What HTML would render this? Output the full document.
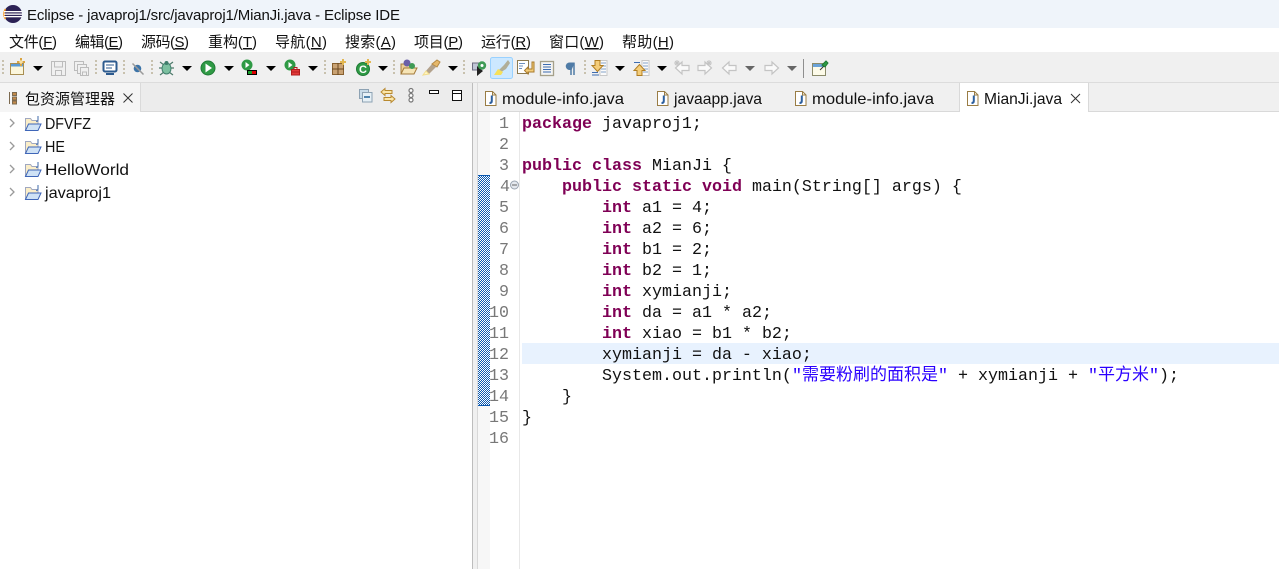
<!DOCTYPE html>
<html lang="zh"><head><meta charset="utf-8"><title>Eclipse</title>
<style>
html,body{margin:0;padding:0;width:1279px;height:569px;overflow:hidden;background:#fff}
svg{display:block;position:absolute;left:0;top:0}
.ui{font-family:"Liberation Sans","Noto Sans CJK SC",sans-serif;font-size:16px;fill:#111}
.cjk{font-family:"Liberation Sans","Noto Sans CJK SC",sans-serif;font-size:15px;fill:#111}
.m text{font-family:"Liberation Mono","Noto Sans CJK SC",monospace;font-size:16.67px;fill:#111;white-space:pre}
.m .k{fill:#7f0055;font-weight:bold}
.m text.s{fill:#2a00ff}
.n text{font-family:"Liberation Mono",monospace;font-size:16.67px;fill:#787878;text-anchor:end}
.u{text-decoration:underline}
</style></head><body>
<svg width="1279" height="569" viewBox="0 0 1279 569" xmlns="http://www.w3.org/2000/svg">
<defs>
<pattern id="chk" width="2" height="2" patternUnits="userSpaceOnUse" x="478" y="175"><rect width="2" height="2" fill="#fff"/><rect width="1" height="1" fill="#0a58b0"/><rect x="1" y="1" width="1" height="1" fill="#0a58b0"/></pattern>
<path id="dd" d="M0 0h10l-5 5z" fill="#000"/>
<path id="ddg" d="M0 0h10l-5 5z" fill="#666"/>
<g id="grip" fill="#c8c1ae"><rect y="0" width="2" height="2"/><rect y="4" width="2" height="2"/><rect y="8" width="2" height="2"/><rect y="12" width="2" height="2"/></g>
<g id="jf"><path d="M.5.5h7l3.500 3.500v10.500h-10.500z" fill="#fff" stroke="#9a7d45"/><path d="M7.500.5v3.500h3" fill="none" stroke="#9a7d45"/><path d="M6.800 4.500v5.500q0 2-2.300 2" fill="none" stroke="#2c5f9e" stroke-width="2"/></g>
<g id="prj"><path d="M1.500 2.500h5l1.500 2h6v9h-12.500z" fill="#fbeec8" stroke="#a0a8c0"/><path d="M1.500 14.500l3-6.500h12.500l-3 6.500z" fill="#cfe2f5" stroke="#3f66b8"/><path d="M14 0v4q0 1.500-2 1.500" fill="none" stroke="#5f82b8" stroke-width="1.200"/></g>
<path id="chev" d="M0 0l4 4-4 4" fill="none" stroke="#9a9a9a" stroke-width="1.300"/>
<path id="x" d="M0 0l9 9M9 0l-9 9" stroke="#333" stroke-width="1" fill="none"/>
<path id="la" d="M.5 7l6.500-6v3.500h7v5h-7v3.500z" fill="#fafafa" stroke="#c4c4c4" stroke-width="1.200"/>
</defs>

<!-- chrome -->
<rect width="1279" height="28" fill="#eff4fa"/>
<rect y="28" width="1279" height="24" fill="#fff"/>
<rect y="52" width="1279" height="31" fill="#f0f0f0"/>
<rect y="82" width="1279" height="1" fill="#dcdcdc"/>
<rect x="0" y="83" width="472" height="29" fill="#ececec"/>
<rect x="0" y="83" width="140" height="29" fill="#f5f5f5"/>
<rect x="140" y="83" width="1" height="29" fill="#dadada"/>
<rect x="141" y="111" width="331" height="1" fill="#d9d9d9"/>
<rect x="472" y="83" width="1" height="486" fill="#bdbdbd"/>
<rect x="473" y="83" width="4" height="486" fill="#f0f0f0"/>
<rect x="477" y="83" width="802" height="29" fill="#f0f0f0"/>
<rect x="477" y="83" width="1" height="29" fill="#dcdcdc"/>
<rect x="477" y="111" width="802" height="1" fill="#d9d9d9"/>
<rect x="959" y="83" width="130" height="29" fill="#fff"/>
<rect x="959" y="83" width="1" height="29" fill="#d9d9d9"/>
<rect x="1088" y="83" width="1" height="29" fill="#d9d9d9"/>
<rect x="477" y="112" width="13" height="457" fill="#f7f7f7"/>
<rect x="477" y="112" width="1" height="457" fill="#d8d8d8"/>
<rect x="478" y="175" width="12" height="230" fill="url(#chk)"/>
<rect x="478" y="175" width="12" height="1" fill="#0a58b0"/>
<rect x="478" y="405" width="12" height="1" fill="#0a58b0"/>
<rect x="519" y="112" width="1" height="457" fill="#e8e8e8"/>
<rect x="522" y="343" width="757" height="21" fill="#e8f2fe"/>

<!-- title -->
<circle cx="13" cy="14" r="9" fill="#2c2255"/>
<path d="M5.500 9a9 9 0 0 0 0 10" fill="none" stroke="#f7941e" stroke-width="1.500"/>
<rect x="4" y="11" width="18" height="1.300" fill="#fff"/><rect x="4" y="13.500" width="18" height="1.300" fill="#fff"/><rect x="4" y="16" width="18" height="1.300" fill="#fff"/>
<text class="ui" x="27" y="20" style="font-size:15px" textLength="373" lengthAdjust="spacing">Eclipse - javaproj1/src/javaproj1/MianJi.java - Eclipse IDE</text>

<!-- menu -->
<g class="cjk">
<text x="9" y="47" textLength="48">文件(<tspan class="u">F</tspan>)</text>
<text x="75" y="47" textLength="48">编辑(<tspan class="u">E</tspan>)</text>
<text x="141" y="47" textLength="48">源码(<tspan class="u">S</tspan>)</text>
<text x="208" y="47" textLength="49">重构(<tspan class="u">T</tspan>)</text>
<text x="275" y="47" textLength="52">导航(<tspan class="u">N</tspan>)</text>
<text x="345" y="47" textLength="51">搜索(<tspan class="u">A</tspan>)</text>
<text x="414" y="47" textLength="49">项目(<tspan class="u">P</tspan>)</text>
<text x="481" y="47" textLength="50">运行(<tspan class="u">R</tspan>)</text>
<text x="549" y="47" textLength="55">窗口(<tspan class="u">W</tspan>)</text>
<text x="622" y="47" textLength="52">帮助(<tspan class="u">H</tspan>)</text>
</g>

<!-- toolbar grips -->
<use href="#grip" x="2" y="60"/><use href="#grip" x="95" y="60"/><use href="#grip" x="123" y="60"/><use href="#grip" x="151" y="60"/><use href="#grip" x="324" y="60"/><use href="#grip" x="393" y="60"/><use href="#grip" x="463" y="60"/><use href="#grip" x="584" y="60"/>

<!-- dropdowns -->
<use href="#dd" x="33" y="66"/><use href="#dd" x="182" y="66"/><use href="#dd" x="224" y="66"/><use href="#dd" x="266" y="66"/><use href="#dd" x="308" y="66"/><use href="#dd" x="378" y="66"/><use href="#dd" x="448" y="66"/><use href="#dd" x="615" y="66"/><use href="#dd" x="657" y="66"/>
<use href="#ddg" x="745" y="66"/><use href="#ddg" x="787" y="66"/>

<!-- new -->
<rect x="10.500" y="63.500" width="13" height="11" fill="#fbf6dc" stroke="#a88e52"/><rect x="11" y="64" width="12" height="2.500" fill="#5b9bd5"/>
<path d="M21 58v8M17 62h8" stroke="#d9a441" stroke-width="2"/><path d="M21 60v4M19 62h4" stroke="#fff4c8"/>
<!-- save -->
<g fill="none" stroke="#bcbcbc"><rect x="51.500" y="61.500" width="14" height="14"/><path d="M54.500 62v5h8v-5M55.500 75v-4.500h6v4.500"/></g>
<g fill="#f0f0f0" stroke="#bcbcbc"><rect x="74.500" y="61.500" width="9" height="9"/><rect x="77.500" y="64.500" width="9" height="9"/><rect x="80.500" y="67.500" width="8" height="8"/><path d="M82.500 75v-3h4v3"/></g>
<!-- monitor -->
<rect x="103.500" y="61.500" width="13" height="10" rx="1.500" fill="#fff" stroke="#2c5a8e" stroke-width="2"/><path d="M106 65h8M106 68h6" stroke="#2c5a8e"/><path d="M106 74h8" stroke="#2c5a8e" stroke-width="2"/>
<!-- skip bp -->
<circle cx="137.500" cy="68.500" r="3.800" fill="#3d74a8"/><path d="M132.500 63.500l11 11" stroke="#9a9a9a" stroke-width="1.500"/>
<!-- bug -->
<g stroke="#4d7a6a" stroke-width="1.200" fill="none"><path d="M160 62l4 3M173 62l-4 3M159 68h4M174 68h-4M160 75l4-3M173 75l-4-3"/></g>
<ellipse cx="166.500" cy="68.500" rx="4.500" ry="5.500" fill="#7cc0a0" stroke="#3f7d6b"/><circle cx="166.500" cy="63" r="2" fill="#3f7d6b"/>
<!-- run -->
<circle cx="208" cy="68" r="7" fill="#2f9a45" stroke="#1f7a35"/><path d="M205.500 63.500l6.500 4.500-6.500 4.500z" fill="#fff"/>
<!-- coverage -->
<circle cx="247" cy="65" r="5.500" fill="#2f9a45"/><path d="M245.500 62l4 3-4 3z" fill="#fff"/>
<rect x="247.500" y="70.500" width="9" height="4" fill="#19a02c" stroke="#000"/><rect x="252" y="71" width="4" height="3" fill="#d00"/>
<!-- ext tools -->
<circle cx="290" cy="65" r="5.500" fill="#2f9a45"/><path d="M288.500 62l4 3-4 3z" fill="#fff"/>
<rect x="291.500" y="69.500" width="8" height="5.500" fill="#e23a3a" stroke="#b01c1c"/><path d="M294 69v-1.500h3v1.500M291 72h9" stroke="#b01c1c" fill="none"/>
<!-- package -->
<rect x="332.500" y="63.500" width="11" height="11" fill="#c9a273" stroke="#87602f"/><path d="M338 63v12M332 69h12" stroke="#6a4820"/>
<path d="M343 59v6M340 62h6" stroke="#e2b753" stroke-width="2"/>
<!-- class -->
<circle cx="363" cy="69" r="6.500" fill="#2f9a45" stroke="#1f7a35"/><text x="359" y="73" style="font:bold 11px 'Liberation Sans',sans-serif;fill:#fff">C</text>
<path d="M368 59v6M365 62h6" stroke="#e2b753" stroke-width="2"/>
<!-- open -->
<path d="M401 74v-10h12v10z" fill="#eccf95" stroke="#a37a3a"/><path d="M401 74l3-6h13l-3 6z" fill="#f6e4b5" stroke="#a37a3a"/>
<circle cx="407" cy="63" r="3.500" fill="#6a5fa8"/><circle cx="412" cy="66" r="3" fill="#3f9a55"/>
<!-- search torch -->
<path d="M425 72l7-8 4 3-7 7z" fill="#b3a28c"/><path d="M432 64l5-4 3 2-3 5z" fill="#e6b86a" stroke="#b58a45"/><path d="M423 75l3-4 3 3z" fill="#fff6c4" stroke="#f2dd8c"/>
<!-- toggle -->
<rect x="472.500" y="63" width="7" height="7" fill="#c0c6d6" stroke="#6b6b80"/><path d="M477 66l0 10 6-5z" fill="#222"/><circle cx="482" cy="65.500" r="4.200" fill="#3f9a55"/><circle cx="482" cy="65.500" r="1.500" fill="#fff"/>
<!-- highlight btn -->
<rect x="490.500" y="57.500" width="22" height="21" rx="2" fill="#cce8ff" stroke="#99d1ff"/>
<path d="M495 74l9-9 4-5 2 3-4 6-8 5z" fill="#b0ae98"/><path d="M494 75l4-6 5 3-2 3z" fill="#f6e05a"/>
<!-- next ann doc -->
<rect x="517.500" y="60.500" width="11" height="13" fill="#fff" stroke="#8c7a50"/><path d="M519 63.500h6M519 66h4M519 68.500h3" stroke="#6d8fbe"/><path d="M532 62v7h-4v-2l-3.500 3.500 3.500 3.500v-2h6v-10z" fill="#f4cd7a" stroke="#a87a2c"/>
<!-- block -->
<rect x="540.500" y="61.500" width="13" height="14" fill="#f4f4f4" stroke="#a5a08a" stroke-width="1.300"/><path d="M543 64.500h8M543 67h8M543 69.500h8M543 72h8" stroke="#3d6cb0"/>
<!-- pilcrow -->
<path d="M574 63v12M571 63v12" stroke="#4f7ba6" stroke-width="1.500"/><path d="M574.800 62.500h-5.300a3.600 3.600 0 0 0 0 7.500h2z" fill="#4f7ba6"/>
<!-- next/prev annotation -->
<rect x="600" y="60.500" width="7" height="15" fill="#fbfbfb" stroke="#c8c8c8"/><path d="M601 63h5M601 66h5M601 69h5M601 72h5" stroke="#86a3c8"/><path d="M592 72.500h6M592 75h7" stroke="#3d6cb0"/>
<path d="M595 60.500h5v5h3l-5.500 6-5.500-6h3z" fill="#f4cd7a" stroke="#b07d22"/>
<rect x="642" y="60.500" width="7" height="15" fill="#fbfbfb" stroke="#c8c8c8"/><path d="M643 63h5M643 66h5M643 69h5M643 72h5" stroke="#86a3c8"/><path d="M634 62.500h6" stroke="#3d6cb0"/>
<path d="M637 75.500h5v-5h3l-5.500-6-5.500 6h3z" fill="#f4cd7a" stroke="#b07d22"/>
<!-- disabled nav -->
<use href="#la" x="675" y="61"/><path d="M677 60v6M674 63h6M675 61l4 4M679 61l-4 4" stroke="#c4c4c4"/>
<use href="#la" transform="translate(712 61) scale(-1 1)"/><path d="M709 60v6M706 63h6M707 61l4 4M711 61l-4 4" stroke="#c4c4c4"/>
<use href="#la" x="722" y="61"/>
<use href="#la" transform="translate(779 61) scale(-1 1)"/>
<rect x="803" y="59" width="1" height="19" fill="#8e8e8e"/>
<!-- pin window -->
<rect x="812.500" y="63.500" width="13" height="12" fill="#fdfbe9" stroke="#8a8a6a"/><rect x="813" y="64" width="12" height="3" fill="#6aa2d8"/><path d="M820 70l4-4" stroke="#333"/><path d="M822 65l4-4 2 2-3 4z" fill="#2f9a45" stroke="#1f7a35"/>

<!-- view tab -->
<g fill="none" stroke="#7c6a50"><path d="M9.500 92v12"/><rect x="12.500" y="92.500" width="4" height="3" fill="#c48a4a"/><rect x="12.500" y="97" width="4" height="3" fill="#c48a4a"/><rect x="12.500" y="101" width="4" height="3" fill="#c48a4a"/></g>
<text class="cjk" x="25" y="104" textLength="90">包资源管理器</text>
<use href="#x" x="123.500" y="93.500"/>
<!-- view toolbar -->
<rect x="359.500" y="89.500" width="9" height="9" fill="#c9dbe8" stroke="#8da2b3"/><rect x="362.500" y="92.500" width="9.500" height="9.500" fill="#e6f0f6" stroke="#8da2b3"/><path d="M364 97h6" stroke="#1f5f94" stroke-width="1.500"/>
<path d="M381 92l4-3.500v2h7v3h-7v2z" fill="#fbe6a8" stroke="#b8892f"/><path d="M395 99l-4-3.500v2h-7v3h7v2z" fill="#fbe6a8" stroke="#b8892f"/>
<g fill="#fff" stroke="#777" stroke-width="1.200"><circle cx="411" cy="90.500" r="2"/><circle cx="411" cy="95.500" r="2"/><circle cx="411" cy="100" r="2"/></g>
<rect x="429.500" y="90.500" width="9" height="3" fill="#fff" stroke="#111"/>
<rect x="452.500" y="90.500" width="9" height="10" fill="#fff" stroke="#111"/><path d="M452 93.500h10" stroke="#111"/>

<!-- tree -->
<use href="#chev" x="10" y="119"/><use href="#chev" x="10" y="142"/><use href="#chev" x="10" y="165"/><use href="#chev" x="10" y="188"/>
<use href="#prj" x="24" y="116"/><use href="#prj" x="24" y="139"/><use href="#prj" x="24" y="162"/><use href="#prj" x="24" y="185"/>
<text class="ui" x="45" y="129" textLength="46" lengthAdjust="spacingAndGlyphs">DFVFZ</text>
<text class="ui" x="45" y="152" textLength="20" lengthAdjust="spacingAndGlyphs">HE</text>
<text class="ui" x="45" y="175" textLength="84" lengthAdjust="spacingAndGlyphs">HelloWorld</text>
<text class="ui" x="45" y="198" textLength="66" lengthAdjust="spacingAndGlyphs">javaproj1</text>

<!-- editor tabs -->
<use href="#jf" x="485" y="91"/><use href="#jf" x="657" y="91"/><use href="#jf" x="795" y="91"/><use href="#jf" x="967" y="91"/>
<text class="ui" x="502" y="104" textLength="122" lengthAdjust="spacingAndGlyphs">module-info.java</text>
<text class="ui" x="674" y="104" textLength="88" lengthAdjust="spacingAndGlyphs">javaapp.java</text>
<text class="ui" x="812" y="104" textLength="122" lengthAdjust="spacingAndGlyphs">module-info.java</text>
<text class="ui" x="984" y="104" textLength="78" lengthAdjust="spacingAndGlyphs">MianJi.java</text>
<use href="#x" x="1071" y="94"/>

<!-- line numbers -->
<g class="n">
<text x="509" y="128">1</text><text x="509" y="149">2</text><text x="509" y="170">3</text><text x="510" y="191">4</text><text x="509" y="212">5</text><text x="509" y="233">6</text><text x="509" y="254">7</text><text x="509" y="275">8</text><text x="509" y="296">9</text><text x="509" y="317">10</text><text x="509" y="338">11</text><text x="509" y="359">12</text><text x="509" y="380">13</text><text x="509" y="401">14</text><text x="509" y="422">15</text><text x="509" y="443">16</text>
</g>
<circle cx="514.500" cy="185" r="4" fill="#e4e8ee" stroke="#9aa4b0"/><path d="M512 185h5" stroke="#666"/>

<!-- code -->
<g class="m" xml:space="preserve">
<text x="522" y="128"><tspan class="k">package</tspan> javaproj1;</text>
<text x="522" y="170"><tspan class="k">public</tspan> <tspan class="k">class</tspan> MianJi {</text>
<text x="562" y="191"><tspan class="k">public</tspan> <tspan class="k">static</tspan> <tspan class="k">void</tspan> main(String[] args) {</text>
<text x="602" y="212"><tspan class="k">int</tspan> a1 = 4;</text>
<text x="602" y="233"><tspan class="k">int</tspan> a2 = 6;</text>
<text x="602" y="254"><tspan class="k">int</tspan> b1 = 2;</text>
<text x="602" y="275"><tspan class="k">int</tspan> b2 = 1;</text>
<text x="602" y="296"><tspan class="k">int</tspan> xymianji;</text>
<text x="602" y="317"><tspan class="k">int</tspan> da = a1 * a2;</text>
<text x="602" y="338"><tspan class="k">int</tspan> xiao = b1 * b2;</text>
<text x="602" y="359">xymianji = da - xiao;</text>
<text x="602" y="380">System.out.println(</text>
<text class="s" x="792" y="380">"</text>
<text class="s" x="802" y="380" style="font-family:'Noto Sans CJK SC',sans-serif;font-size:17px">需要粉刷的面积是</text>
<text class="s" x="938" y="380">"</text>
<text x="958" y="380">+ xymianji +</text>
<text class="s" x="1088" y="380">"</text>
<text class="s" x="1098" y="380" style="font-family:'Noto Sans CJK SC',sans-serif;font-size:17px">平方米</text>
<text class="s" x="1149" y="380">"</text>
<text x="1159" y="380">);</text>
<text x="562" y="401">}</text>
<text x="522" y="422">}</text>
</g>
</svg>
</body></html>
